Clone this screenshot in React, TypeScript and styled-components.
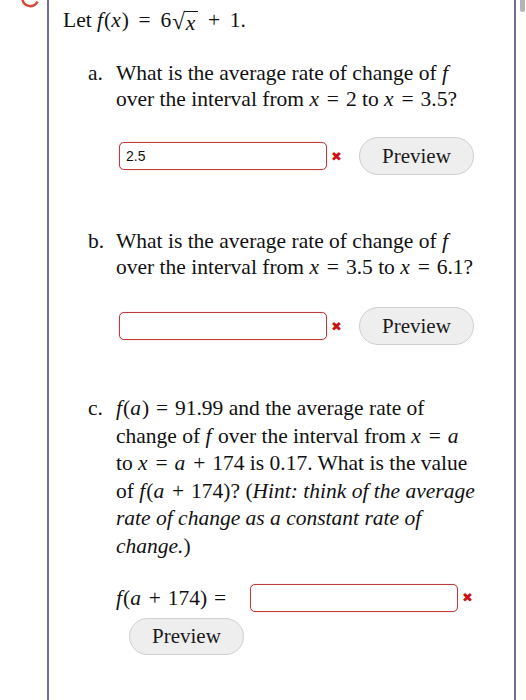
import React from 'react';
import styled, { createGlobalStyle } from 'styled-components';

const GlobalStyle = createGlobalStyle`
  html, body {
    margin: 0;
    padding: 0;
    background: #fff;
  }
  body {
    font-family: "Liberation Serif", "Times New Roman", serif;
    color: #111;
  }
`;

const Page = styled.div`
  display: flex;
  height: 700px;
  overflow: hidden;
`;

const LeftGutter = styled.div`
  width: 47px;
  flex-shrink: 0;
  display: flex;
  align-items: flex-start;
`;

const RightGutter = styled.div`
  flex: 1;
  display: flex;
  justify-content: center;
  padding-left: 2px;
`;

const ScrollThumb = styled.div`
  width: 5px;
  height: 12px;
  background: #b5b5b5;
  border-radius: 0 0 3px 3px;
`;

const Card = styled.div`
  width: 451px;
  flex-shrink: 0;
  border-left: 2px solid #6c6c94;
  border-right: 2px solid #6c6c94;
  padding: 7px 0 0 14px;
  box-sizing: content-box;
  font-size: 21.5px;
  line-height: 26px;
`;

const Intro = styled.p`
  margin: 0 0 26px;
  white-space: nowrap;
`;

const Part = styled.div<{ $gap: number }>`
  display: flex;
  margin-left: 25px;
  margin-bottom: ${p => p.$gap}px;
`;

const Label = styled.span`
  width: 28px;
  flex-shrink: 0;
`;

const Body = styled.div`
  flex: 1;
`;

const Question = styled.p<{ $lh?: number }>`
  margin: 0;
  white-space: nowrap;
  line-height: ${p => p.$lh ?? 26}px;
`;

const AnswerRow = styled.div<{ $top: number }>`
  display: flex;
  align-items: center;
  margin-top: ${p => p.$top}px;
  padding-left: 3px;
`;

const Field = styled.span`
  display: inline-flex;
  align-items: center;
`;

const Input = styled.input`
  width: 208px;
  height: 28px;
  box-sizing: border-box;
  border: 1px solid #c0393b;
  border-radius: 5px;
  box-shadow: 0 0 1px rgba(192, 57, 59, 0.5);
  padding: 0 6px;
  font-family: "Liberation Sans", Arial, sans-serif;
  font-size: 14px;
  color: #111;
  outline: none;
`;

const Wrong = styled.span`
  color: #cc1111;
  font-family: "DejaVu Sans", sans-serif;
  font-size: 13px;
  line-height: 13px;
  margin-left: 4px;
  width: 12px;
`;

const PreviewButton = styled.button<{ $left: number; $h?: number }>`
  height: ${p => p.$h ?? 38}px;
  padding: 0 22px;
  margin-left: ${p => p.$left}px;
  background: #eeeeee;
  border: 1px solid #cfcfcf;
  border-radius: 19px;
  font-family: "Liberation Serif", "Times New Roman", serif;
  font-size: 21px;
  color: #1a1a1a;
`;

const FuncRow = styled.div`
  display: flex;
  align-items: center;
  margin-top: 23px;
  gap: 17px;
`;

const MathLabel = styled.span`
  white-space: nowrap;
`;

const PreviewRow = styled.div`
  padding-left: 13px;
  margin-top: 6px;
`;

const MI = styled.i`
  font-style: italic;
  padding-right: 1px;
`;

const Op = styled.span<{ $wide?: boolean }>`
  margin: 0 ${p => (p.$wide ? 0.45 : 0.32)}em;
`;

const Root = styled.span`
  display: inline-flex;
  align-items: flex-end;
  vertical-align: -2px;
  margin-left: 1px;
`;

const Radicand = styled.span`
  border-top: 1px solid #111;
  line-height: 22px;
  padding: 0 2px;
  margin-left: -1px;
`;

const RadicalSign = styled.span`
  font-size: 23px;
  line-height: 24px;
`;

const Hint = styled.i`
  font-style: italic;
`;

function StatusIcon() {
  return (
    <svg width="47" height="10" viewBox="0 0 47 10">
      <path d="M 22.5 0 A 8 8 0 0 0 37.5 1.5" fill="none" stroke="#d24a3a" strokeWidth="2.6" />
    </svg>
  );
}

export default function App() {
  return (
    <>
      <GlobalStyle />
      <Page>
        <LeftGutter>
          <StatusIcon />
        </LeftGutter>
        <Card>
          <Intro>
            Let <MI>f</MI>(<MI>x</MI>)<Op $wide>=</Op>6
            <Root>
              <RadicalSign>√</RadicalSign>
              <Radicand><MI>x</MI></Radicand>
            </Root>
            <Op $wide>+</Op>1.
          </Intro>

          <Part $gap={53}>
            <Label>a.</Label>
            <Body>
              <Question>
                What is the average rate of change of <MI>f</MI>
                <br />
                over the interval from <MI>x</MI><Op>=</Op>2 to <MI>x</MI><Op>=</Op>3.5?
              </Question>
              <AnswerRow $top={25}>
                <Field>
                  <Input defaultValue="2.5" />
                  <Wrong>✖</Wrong>
                </Field>
                <PreviewButton $left={16}>Preview</PreviewButton>
              </AnswerRow>
            </Body>
          </Part>

          <Part $gap={50}>
            <Label>b.</Label>
            <Body>
              <Question>
                What is the average rate of change of <MI>f</MI>
                <br />
                over the interval from <MI>x</MI><Op>=</Op>3.5 to <MI>x</MI><Op>=</Op>6.1?
              </Question>
              <AnswerRow $top={27}>
                <Field>
                  <Input />
                  <Wrong>✖</Wrong>
                </Field>
                <PreviewButton $left={16}>Preview</PreviewButton>
              </AnswerRow>
            </Body>
          </Part>

          <Part $gap={40}>
            <Label>c.</Label>
            <Body>
              <Question $lh={27.6}>
                <MI>f</MI>(<MI>a</MI>)<Op>=</Op>91.99 and the average rate of
                <br />
                change of <MI>f</MI> over the interval from <MI>x</MI><Op>=</Op><MI>a</MI>
                <br />
                to <MI>x</MI><Op>=</Op><MI>a</MI><Op>+</Op>174 is 0.17. What is the value
                <br />
                of <MI>f</MI>(<MI>a</MI><Op>+</Op>174)? (<Hint>Hint: think of the average</Hint>
                <br />
                <Hint>rate of change as a constant rate of</Hint>
                <br />
                <Hint>change.</Hint>)
              </Question>
              <FuncRow>
                <MathLabel>
                  <MI>f</MI>(<MI>a</MI><Op>+</Op>174)<Op>=</Op>
                </MathLabel>
                <Field>
                  <Input />
                  <Wrong>✖</Wrong>
                </Field>
              </FuncRow>
              <PreviewRow>
                <PreviewButton $left={0} $h={37}>Preview</PreviewButton>
              </PreviewRow>
            </Body>
          </Part>
        </Card>
        <RightGutter>
          <ScrollThumb />
        </RightGutter>
      </Page>
    </>
  );
}
